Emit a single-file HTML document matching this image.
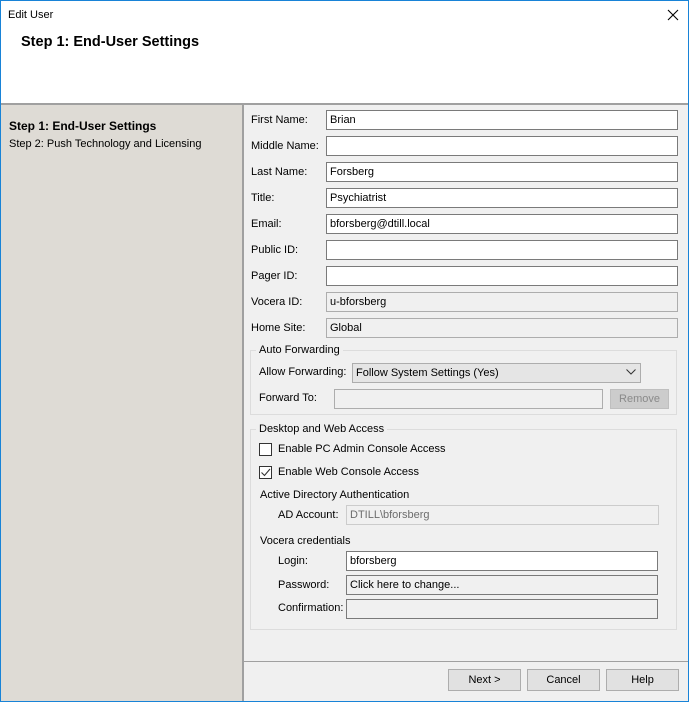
<!DOCTYPE html>
<html><head><meta charset="utf-8"><style>
*{box-sizing:border-box;margin:0;padding:0}
body{width:689px;height:702px;overflow:hidden;font-family:"Liberation Sans",sans-serif;font-size:11px;color:#000;background:#fff;position:relative}
.a{position:absolute;white-space:nowrap}
.in{position:absolute;border:1px solid #7a7a7a;background:#fff;height:20px;padding:3px 3px;white-space:nowrap;font-size:11px}
.ro{background:#f0f0f0;border-color:#adadad}
.dis{background:#f0f0f0;border-color:#cccccc;color:#6d6d6d}
.grp{position:absolute;border:1px solid #dcdcdc}
.gl{position:absolute;background:#f0f0f0;padding:0 3px;white-space:nowrap}
.btn{position:absolute;border:1px solid #adadad;background:#e1e1e1;height:22px;text-align:center;line-height:20px}
.cb{position:absolute;width:13px;height:13px;border:1px solid #333;background:#fff}
</style></head><body>
<div class="a" style="left:8px;top:9px">Edit User</div>
<svg class="a" style="left:667px;top:9px" width="12" height="12"><path d="M1 1L11 11M11 1L1 11" stroke="#000" stroke-width="1.1"/></svg>
<div class="a" style="left:21px;top:34px;font-size:14.5px;font-weight:bold">Step 1: End-User Settings</div>
<div class="a" style="left:0;top:103px;width:689px;height:2px;background:#a0a0a0"></div>
<div class="a" style="left:0;top:105px;width:242px;height:597px;background:#dedbd5"></div>
<div class="a" style="left:242px;top:105px;width:2px;height:597px;background:#a0a0a0"></div>
<div class="a" style="left:244px;top:105px;width:445px;height:597px;background:#f0f0f0"></div>
<div class="a" style="left:9px;top:119px;font-weight:bold;font-size:12px">Step 1: End-User Settings</div>
<div class="a" style="left:9px;top:138px">Step 2: Push Technology and Licensing</div>

<div class="a" style="left:251px;top:114px">First Name:</div><div class="in" style="left:326px;top:110px;width:352px">Brian</div>
<div class="a" style="left:251px;top:140px">Middle Name:</div><div class="in" style="left:326px;top:136px;width:352px"></div>
<div class="a" style="left:251px;top:166px">Last Name:</div><div class="in" style="left:326px;top:162px;width:352px">Forsberg</div>
<div class="a" style="left:251px;top:192px">Title:</div><div class="in" style="left:326px;top:188px;width:352px">Psychiatrist</div>
<div class="a" style="left:251px;top:218px">Email:</div><div class="in" style="left:326px;top:214px;width:352px">bforsberg@dtill.local</div>
<div class="a" style="left:251px;top:244px">Public ID:</div><div class="in" style="left:326px;top:240px;width:352px"></div>
<div class="a" style="left:251px;top:270px">Pager ID:</div><div class="in" style="left:326px;top:266px;width:352px"></div>
<div class="a" style="left:251px;top:296px">Vocera ID:</div><div class="in ro" style="left:326px;top:292px;width:352px">u-bforsberg</div>
<div class="a" style="left:251px;top:322px">Home Site:</div><div class="in ro" style="left:326px;top:318px;width:352px">Global</div>

<div class="grp" style="left:250px;top:350px;width:427px;height:65px"></div>
<div class="gl" style="left:256px;top:344px">Auto Forwarding</div>
<div class="a" style="left:259px;top:366px">Allow Forwarding:</div>
<div class="in" style="left:352px;top:363px;width:289px;background:#e5e5e5;border-color:#adadad">Follow System Settings (Yes)</div>
<svg class="a" style="left:626px;top:369px" width="10" height="6"><path d="M0.5 0.5L5 5L9.5 0.5" stroke="#333" fill="none"/></svg>
<div class="a" style="left:259px;top:392px">Forward To:</div>
<div class="in ro" style="left:334px;top:389px;width:269px"></div>
<div class="btn" style="left:610px;top:389px;width:59px;height:20px;line-height:18px;color:#8a8a8a;background:#cccccc;border-color:#bfbfbf">Remove</div>

<div class="grp" style="left:250px;top:429px;width:427px;height:201px"></div>
<div class="gl" style="left:256px;top:423px">Desktop and Web Access</div>
<div class="cb" style="left:259px;top:443px"></div>
<div class="a" style="left:278px;top:443px">Enable PC Admin Console Access</div>
<div class="cb" style="left:259px;top:466px"><svg width="11" height="11" style="position:absolute;left:0;top:0"><path d="M1.5 5.5L4.5 8.5L10 2" stroke="#333" fill="none" stroke-width="1.1"/></svg></div>
<div class="a" style="left:278px;top:466px">Enable Web Console Access</div>
<div class="a" style="left:260px;top:489px">Active Directory Authentication</div>
<div class="a" style="left:278px;top:509px">AD Account:</div>
<div class="in dis" style="left:346px;top:505px;width:313px">DTILL\bforsberg</div>
<div class="a" style="left:260px;top:535px">Vocera credentials</div>
<div class="a" style="left:278px;top:555px">Login:</div>
<div class="in" style="left:346px;top:551px;width:312px">bforsberg</div>
<div class="a" style="left:278px;top:579px">Password:</div>
<div class="in ro" style="left:346px;top:575px;width:312px;border-color:#7a7a7a">Click here to change...</div>
<div class="a" style="left:278px;top:602px">Confirmation:</div>
<div class="in ro" style="left:346px;top:599px;width:312px;border-color:#7a7a7a"></div>

<div class="a" style="left:244px;top:661px;width:445px;height:1px;background:#a0a0a0"></div>
<div class="btn" style="left:448px;top:669px;width:73px">Next &gt;</div>
<div class="btn" style="left:527px;top:669px;width:73px">Cancel</div>
<div class="btn" style="left:606px;top:669px;width:73px">Help</div>
<div class="a" style="left:0;top:0;width:689px;height:702px;border:1px solid #1883d7"></div>
</body></html>
